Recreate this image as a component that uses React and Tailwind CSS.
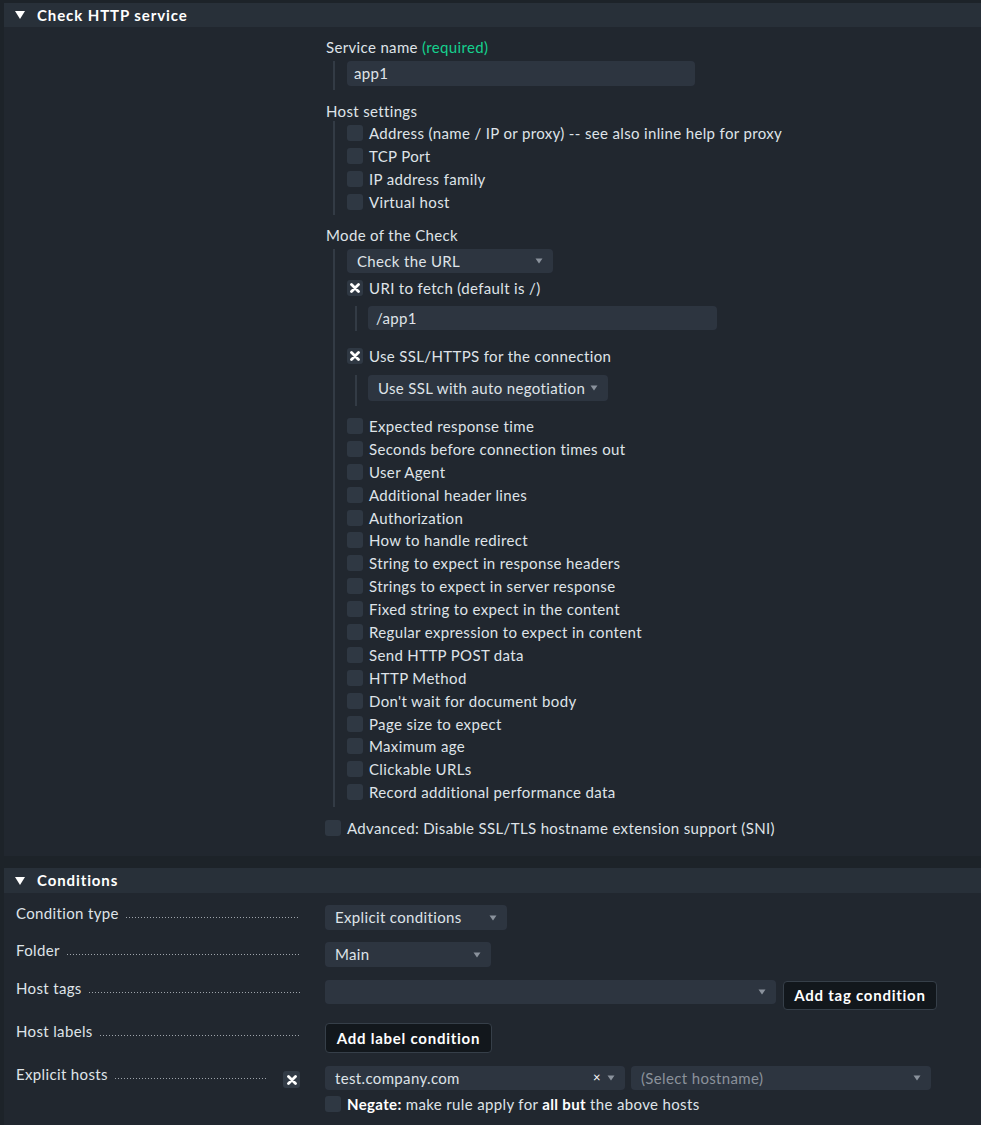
import {useState} from "react";

// Small grey dropdown arrow
function Arrow(){
    return(
        <svg width="8" height="6" viewBox="0 0 8 6" className="shrink-0"><path d="M0.5 0.5h7L4 5.5z" fill="#8a929c"/></svg>
    )
}

// Bold cross used in checked boxes
function Cross(){
    return(
        <svg width="10" height="10" viewBox="0 0 10 10"><path d="M1.5 1.5l7 7M8.5 1.5l-7 7" stroke="#ffffff" strokeWidth="2.8" strokeLinecap="round"/></svg>
    )
}

function Checkbox({checked}){
    return(
        <span className="w-4 h-4 rounded-[3px] bg-[#2f3843] flex items-center justify-center shrink-0">
            {checked && <Cross/>}
        </span>
    )
}

function CheckRow({label, checked, h = "h-[23px]"}){
    return(
        <div className={`flex items-center gap-[6px] ${h}`}>
            <Checkbox checked={checked}/>
            <span className="leading-5 whitespace-nowrap">{label}</span>
        </div>
    )
}

function Select({value, className, placeholder}){
    return(
        <div className={`flex items-center justify-between rounded bg-[#2d3540] pl-[10px] pr-[10px] ${className}`}>
            <span className={`whitespace-nowrap ${placeholder ? "text-[#8b929b]" : ""}`}>{value}</span>
            <Arrow/>
        </div>
    )
}

function SectionHeader({title, h}){
    return(
        <div className={`${h} bg-[#283039] flex items-center pl-[11px] gap-[12px]`}>
            <svg width="10" height="8" viewBox="0 0 10 8"><path d="M0 0h10L5 8z" fill="#ffffff"/></svg>
            <h5 className="font-bold text-white tracking-[0.06em]">{title}</h5>
        </div>
    )
}

function CondLabel({label, extra}){
    return(
        <div className="w-[321px] pl-[12px] pr-[25px] -mt-[2px] flex items-start shrink-0">
            <div className="flex items-end flex-1 min-w-0 h-5">
                <span className="whitespace-nowrap leading-5">{label}</span>
                {/*  Dotted leader  */}
                <div className="flex-1 ml-[7px] mb-[5px] h-px bg-[linear-gradient(to_right,#9ea4ab_1px,transparent_1px)] bg-[length:3px_1px] bg-repeat-x"/>
            </div>
            {extra}
        </div>
    )
}

const hostSettings = ["Address (name / IP or proxy) -- see also inline help for proxy", "TCP Port", "IP address family", "Virtual host"];

const checkOptions = [
    "Expected response time",
    "Seconds before connection times out",
    "User Agent",
    "Additional header lines",
    "Authorization",
    "How to handle redirect",
    "String to expect in response headers",
    "Strings to expect in server response",
    "Fixed string to expect in the content",
    "Regular expression to expect in content",
    "Send HTTP POST data",
    "HTTP Method",
    "Don't wait for document body",
    "Page size to expect",
    "Maximum age",
    "Clickable URLs",
    "Record additional performance data",
];

function App(){
    const [serviceName] = useState("app1");

    return(
        <div className="min-h-[1125px] bg-[#1d2329] pt-[3px] pl-[4px] text-[15px] tracking-[0.35px] text-[#dfe3e8] font-['Lato',sans-serif]">
            {/*  Check HTTP service  */}
            <SectionHeader title="Check HTTP service" h="h-[24px]"/>
            <div className="h-[829px] bg-[#21272f] pl-[322px] pt-[10px]">
                {/*  Service name  */}
                <p className="leading-5">Service name <span className="text-[#15d18e]">(required)</span></p>
                <div className="mt-[4px] ml-[7px] border-l-2 border-[#333b45] pl-[12px] pb-[4px]">
                    <div className="h-[25px] w-[348px] rounded bg-[#2d3540] flex items-center pl-[7px]">{serviceName}</div>
                </div>

                {/*  Host settings  */}
                <p className="leading-5 mt-[11px]">Host settings</p>
                <div className="ml-[7px] border-l-2 border-[#333b45] pl-[12px] pb-[2px]">
                    {hostSettings.map((item, index)=>(
                        <CheckRow key={index} label={item}/>
                    ))}
                </div>

                {/*  Mode of the Check  */}
                <p className="leading-5 mt-[10px]">Mode of the Check</p>
                <div className="mt-[4px] ml-[7px] border-l-2 border-[#333b45] pl-[12px] pb-[3px]">
                    <Select value="Check the URL" className="h-[24px] w-[206px] pl-[9px]"/>
                    <div className="mt-[3px]"><CheckRow label="URI to fetch (default is /)" checked/></div>
                    <div className="mt-[7px] ml-[8px] border-l-2 border-[#333b45] pl-[11px] pb-[1px]">
                        <div className="h-[24px] w-[349px] rounded bg-[#2d3540] flex items-center pl-[8px]">/app1</div>
                    </div>
                    <div className="mt-[13.5px]"><CheckRow label="Use SSL/HTTPS for the connection" checked/></div>
                    <div className="mt-[7.5px] ml-[8px] border-l-2 border-[#333b45] pl-[11px] pb-[5px]">
                        <Select value="Use SSL with auto negotiation" className="h-[26px] w-[240px] pl-[9px] pr-[8px]"/>
                    </div>
                    <div className="mt-[8.5px]">
                        {checkOptions.map((item, index)=>(
                            <CheckRow key={index} label={item} h="h-[22.9px]"/>
                        ))}
                    </div>
                </div>

                {/*  Advanced  */}
                <div className="mt-[9.5px] -ml-px">
                    <CheckRow label="Advanced: Disable SSL/TLS hostname extension support (SNI)"/>
                </div>
            </div>

            {/*  Conditions  */}
            <div className="h-[12px]"/>
            <SectionHeader title="Conditions" h="h-[25px]"/>
            <div className="min-h-[232px] bg-[#21272f] pt-[12px]">
                {/*  Condition type  */}
                <div className="flex items-start h-[25px]">
                    <CondLabel label="Condition type"/>
                    <Select value="Explicit conditions" className="h-[25px] w-[182px]"/>
                </div>

                {/*  Folder  */}
                <div className="flex items-start h-[25px] mt-[12px]">
                    <CondLabel label="Folder"/>
                    <Select value="Main" className="h-[25px] w-[166px]"/>
                </div>

                {/*  Host tags  */}
                <div className="flex items-start mt-[13px]">
                    <CondLabel label="Host tags"/>
                    <Select value="" className="h-[24px] w-[451px]"/>
                    <button className="ml-[7px] mt-px h-[29px] w-[154px] rounded bg-[#12171c] border border-[#363f49] font-bold text-white tracking-[0.05em]">Add tag condition</button>
                </div>

                {/*  Host labels  */}
                <div className="flex items-start mt-[13px]">
                    <CondLabel label="Host labels"/>
                    <button className="h-[30px] w-[167px] rounded bg-[#12171c] border border-[#363f49] font-bold text-white tracking-[0.05em]">Add label condition</button>
                </div>

                {/*  Explicit hosts  */}
                <div className="flex items-start mt-[13px]">
                    <CondLabel label="Explicit hosts" extra={
                        <span className="ml-[17px] mt-[7px] w-[17px] h-[17px] rounded-[3px] bg-[#323b46] flex items-center justify-center shrink-0"><Cross/></span>
                    }/>
                    <div>
                        <div className="flex gap-[6px]">
                            <div className="flex items-center justify-between rounded bg-[#2d3540] pl-[10px] pr-[10px] h-[24px] w-[300px]">
                                <span>test.company.com</span>
                                <span className="flex items-center gap-[6px]"><span className="text-white text-[13px]">×</span><Arrow/></span>
                            </div>
                            <Select value="(Select hostname)" placeholder className="h-[24px] w-[300px]"/>
                        </div>
                        <div className="flex items-center gap-[6px] mt-[6px] h-4">
                            <Checkbox/>
                            <span className="leading-5 whitespace-nowrap"><b className="text-white">Negate:</b> make rule apply for <b className="text-white">all but</b> the above hosts</span>
                        </div>
                    </div>
                </div>
            </div>
        </div>
    )
}

export default App;
